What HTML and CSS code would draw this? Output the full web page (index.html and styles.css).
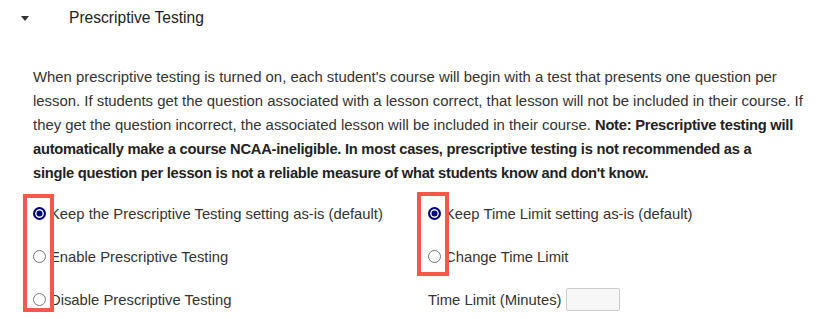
FILE: index.html
```html
<!DOCTYPE html>
<html lang="en">
<head>
  <meta charset="UTF-8" />
  <title>Prescriptive Testing</title>
  <link rel="stylesheet" href="styles.css">
</head>
<body>

<div class="section-head">
  <span class="caret"></span>
  <span class="section-title">Prescriptive Testing</span>
</div>

<div class="section-body">
  <p class="intro">
    When prescriptive testing is turned on, each student's course will begin with a test that presents one question per<br>
    lesson. If students get the question associated with a lesson correct, that lesson will not be included in their course. If<br>
    they get the question incorrect, the associated lesson will be included in their course.
    <strong>Note: Prescriptive testing will<br>
    automatically make a course NCAA-ineligible. In most cases, prescriptive testing is not recommended as a<br>
    single question per lesson is not a reliable measure of what students know and don't know.</strong>
  </p>

  <div class="options">
    <!-- Left: prescriptive testing choice -->
    <div class="option-group">
      <span class="highlight highlight-left"></span>
      <label class="option"><input type="radio" name="pt" checked> Keep the Prescriptive Testing setting as-is (default)</label>
      <label class="option"><input type="radio" name="pt"> Enable Prescriptive Testing</label>
      <label class="option"><input type="radio" name="pt"> Disable Prescriptive Testing</label>
    </div>

    <!-- Right: time limit -->
    <div class="option-group">
      <span class="highlight highlight-right"></span>
      <label class="option"><input type="radio" name="tl" checked> Keep Time Limit setting as-is (default)</label>
      <label class="option"><input type="radio" name="tl"> Change Time Limit</label>
      <div class="option time-row">
        <span>Time Limit (Minutes)</span>
        <input type="text" class="minutes">
      </div>
    </div>
  </div>
</div>

</body>
</html>
```

FILE: styles.css
```css
body {
  margin: 0;
  background: #fff;
  font-family: 'Liberation Sans', Arial, sans-serif;
  color: #333;
}
.section-head {
  display: flex;
  align-items: center;
  height: 36px;
  padding-left: 21px;
}
.caret {
  width: 0;
  height: 0;
  border-left: 4px solid transparent;
  border-right: 4px solid transparent;
  border-top: 5px solid #333;
  margin-right: 40px;
}
.section-title {
  font-size: 15.6px;
  color: #222;
}
.section-body {
  padding: 0 0 0 33px;
}
.intro {
  margin: 29px 0 7px;
  font-size: 14.9px;
  line-height: 24px;
  white-space: nowrap;
}
.intro strong {
  color: #222;
  font-size: 14.7px;
  letter-spacing: -0.25px;
}
.options {
  display: flex;
}
.option-group {
  position: relative;
  width: 395px;
}
.option {
  display: flex;
  align-items: center;
  height: 43px;
  font-size: 14.8px;
}
.option input[type="radio"] {
  appearance: none;
  width: 13px;
  height: 13px;
  margin: 0 4px 0 0;
  border: 1px solid #767676;
  border-radius: 50%;
  background: #fff;
}
.option input[type="radio"]:checked {
  border: 2px solid #00007a;
  box-shadow: inset 0 0 0 1.5px #fff;
  background: #00007a;
}
.time-row span {
  margin-right: 5px;
}
.minutes {
  width: 54px;
  height: 23px;
  padding: 0;
  border: 1px solid #ccc;
  border-radius: 2px;
  background: #f7f7f7;
  box-sizing: border-box;
}
.highlight {
  position: absolute;
  border: 4px solid #f5584b;
  pointer-events: none;
}
.highlight-left {
  left: -10px;
  top: 2px;
  width: 23px;
  height: 110px;
}
.highlight-right {
  left: -11px;
  top: 0;
  width: 24px;
  height: 76px;
}
```
